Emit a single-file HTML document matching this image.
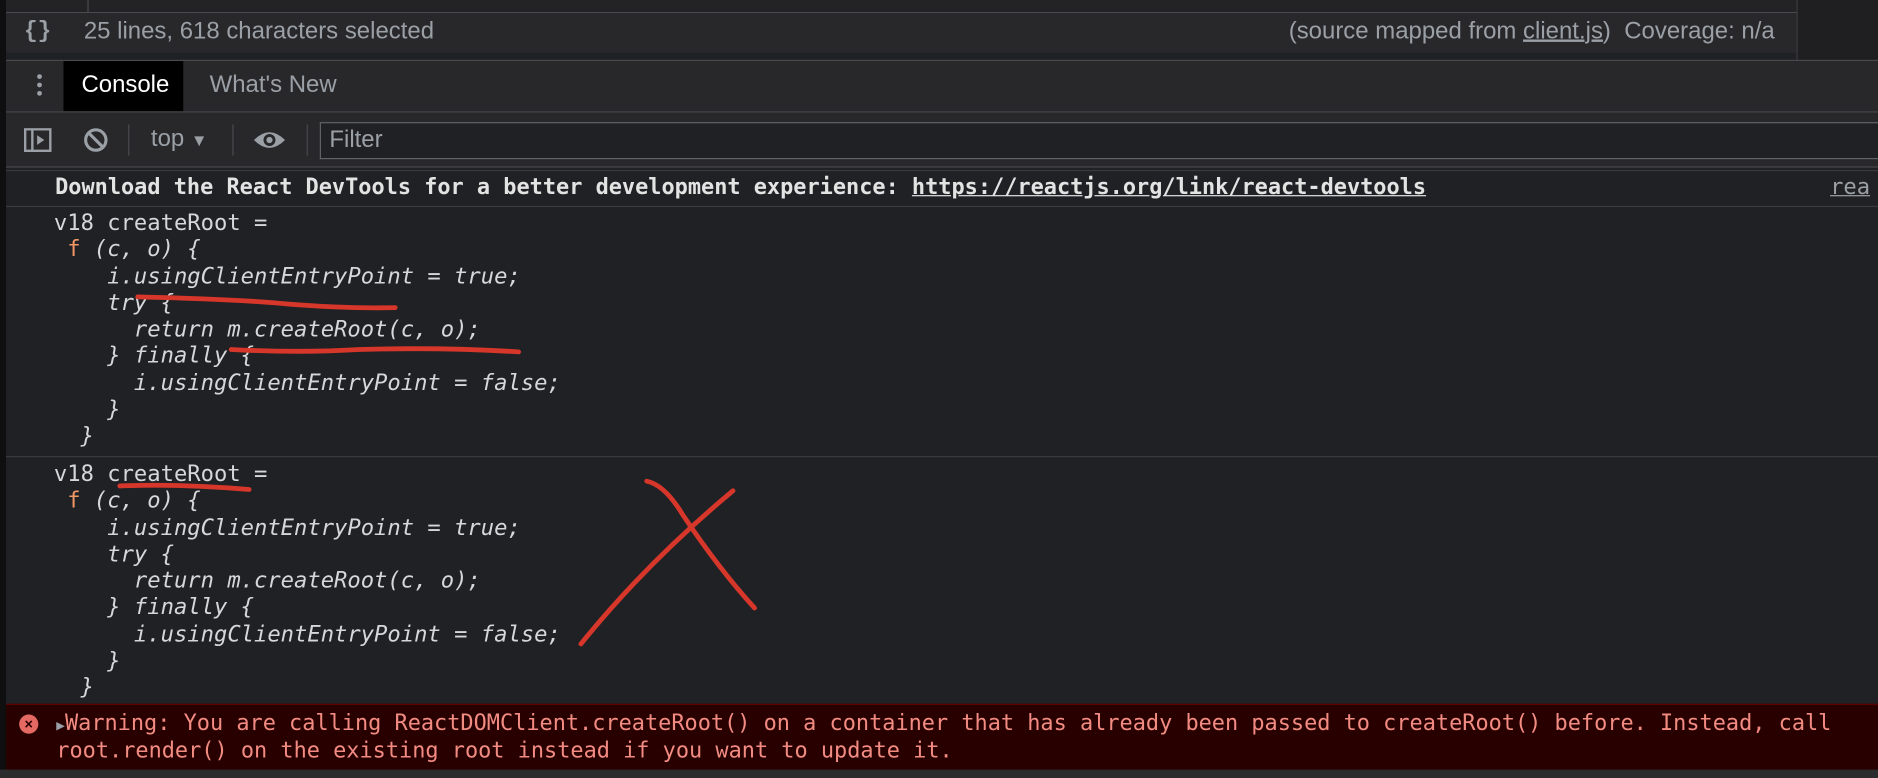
<!DOCTYPE html>
<html><head><meta charset="utf-8"><style>
html,body{margin:0;padding:0;background:#202124;overflow:hidden;width:1878px;height:778px}
#w{position:absolute;left:0;top:0;width:1568px;height:650px;transform:scale(1.19770,1.19692);transform-origin:0 0;background:#202124;font-family:"Liberation Sans",sans-serif}
.a{position:absolute}
.mono{font-family:"DejaVu Sans Mono","Liberation Mono",monospace;font-size:18.5px;white-space:pre;color:#d5d7da}
.code{font-style:italic}
</style></head><body><div id="w">
<div class="a" style="left:0;top:0;width:1568px;height:10px;background:#232325"></div>
<div class="a" style="left:73px;top:0;width:1px;height:10px;background:#4a4a4c"></div>
<div class="a" style="left:5px;top:10px;width:1495px;height:1px;background:#4a4a4d"></div>
<div class="a" style="left:5px;top:11px;width:1495px;height:33px;background:#28282b"></div>
<div class="a" style="left:1500px;top:0;width:1px;height:50px;background:#3e3e40"></div>
<div class="a" style="left:1501px;top:0;width:67px;height:50px;background:#1f1f21"></div>
<div class="a" style="left:20px;top:15px;font-size:19px;color:#9aa0a6;font-family:'Liberation Mono',monospace;font-weight:bold">{}</div>
<div class="a" style="left:70px;top:15px;font-size:20px;color:#9aa0a6">25 lines, 618 characters selected</div>
<div class="a" style="left:1076px;top:15px;font-size:20px;color:#9aa0a6;white-space:nowrap">(source mapped from <u>client.js</u>)&nbsp; Coverage: n/a</div>
<div class="a" style="left:5px;top:50px;width:1563px;height:1px;background:#4a4a4d"></div>
<div class="a" style="left:5px;top:51px;width:1563px;height:42px;background:#28282b"></div>
<div class="a" style="left:31px;top:62px;width:4px;height:4px;border-radius:2px;background:#9aa0a6;box-shadow:0 7px 0 #9aa0a6,0 14px 0 #9aa0a6"></div>
<div class="a" style="left:53px;top:51px;width:100px;height:42px;background:#000"></div>
<div class="a" style="left:68px;top:60px;font-size:20px;color:#fff">Console</div>
<div class="a" style="left:175px;top:60px;font-size:20px;color:#9aa0a6">What's New</div>
<div class="a" style="left:5px;top:93px;width:1563px;height:1px;background:#48484b"></div>
<div class="a" style="left:5px;top:94px;width:1563px;height:45px;background:#28282b"></div>
<svg class="a" style="left:20px;top:107px" width="24" height="20" viewBox="0 0 24 20"><rect x="1" y="1" width="21" height="18" fill="none" stroke="#9aa0a6" stroke-width="2"/><line x1="7" y1="1" x2="7" y2="19" stroke="#9aa0a6" stroke-width="2"/><path d="M11 6 L17 10 L11 14Z" fill="#9aa0a6"/></svg>
<svg class="a" style="left:69px;top:106px" width="22" height="22" viewBox="0 0 22 22"><circle cx="11" cy="11" r="8.5" fill="none" stroke="#9aa0a6" stroke-width="2.6"/><line x1="5" y1="5" x2="17" y2="17" stroke="#9aa0a6" stroke-width="2.6"/></svg>
<div class="a" style="left:107px;top:104px;width:1px;height:26px;background:#4a4a4d"></div>
<div class="a" style="left:126px;top:105px;font-size:20px;color:#9aa0a6">top <span style="font-size:14px">▼</span></div>
<div class="a" style="left:194px;top:104px;width:1px;height:26px;background:#4a4a4d"></div>
<svg class="a" style="left:211px;top:107px" width="28" height="20" viewBox="0 0 28 20"><path d="M1 10 Q14 -3 27 10 Q14 23 1 10Z" fill="#9aa0a6"/><circle cx="14" cy="10" r="5" fill="#28282b"/><circle cx="14" cy="10" r="2.6" fill="#9aa0a6"/></svg>
<div class="a" style="left:256px;top:104px;width:1px;height:26px;background:#4a4a4d"></div>
<div class="a" style="left:267px;top:102px;width:1300px;height:29px;border:1px solid #5f6368;border-right:none;background:#202124"></div>
<div class="a" style="left:275px;top:106px;font-size:20px;color:#9aa0a6">Filter</div>
<div class="a" style="left:5px;top:139px;width:1563px;height:1px;background:#4a4a4d"></div>
<div class="a" style="left:5px;top:142px;width:1563px;height:1px;background:#3a3a3c"></div>
<div class="a" style="left:0;top:0;width:5px;height:650px;background:#0f0f10"></div>
<div class="a mono" style="left:46px;top:146px;font-weight:bold;color:#e3e3e3;font-size:18.3px">Download the React DevTools for a better development experience: <u>https://reactjs.org/link/react-devtools</u></div>
<div class="a mono" style="left:1528px;top:146px;color:#9aa0a6"><u>rea</u></div>
<div class="a" style="left:5px;top:172px;width:1563px;height:1px;background:#3c3c3e"></div>
<div class="a mono" style="left:45px;top:176px;line-height:22.3px">v18 createRoot =
 <span style="color:#f29766">f</span><span class="code"> (c, o) {
    i.usingClientEntryPoint = true;
    try {
      return m.createRoot(c, o);
    } finally {
      i.usingClientEntryPoint = false;
    }
  }</span></div>
<div class="a" style="left:5px;top:381px;width:1563px;height:1px;background:#3c3c3e"></div>
<div class="a mono" style="left:45px;top:386px;line-height:22.3px">v18 createRoot =
 <span style="color:#f29766">f</span><span class="code"> (c, o) {
    i.usingClientEntryPoint = true;
    try {
      return m.createRoot(c, o);
    } finally {
      i.usingClientEntryPoint = false;
    }
  }</span></div>
<div class="a" style="left:5px;top:588px;width:1563px;height:55px;background:#290000;border-top:1px solid #5c0000"></div>
<div class="a" style="left:16px;top:597px;width:16px;height:16px;border-radius:8px;background:#e46962;color:#290000;font-size:12px;font-weight:bold;text-align:center;line-height:16px">×</div>
<div class="a mono" style="left:47px;top:594px;line-height:22px;color:#f28b82;font-size:18.3px"><span style="color:#9aa0a6;font-size:12px">▶</span>Warning: You are calling ReactDOMClient.createRoot() on a container that has already been passed to createRoot() before. Instead, call
root.render() on the existing root instead if you want to update it.</div>
<div class="a" style="left:0;top:643px;width:1568px;height:7px;background:#2b2b2d"></div>
<svg class="a" style="left:0;top:0" width="1568" height="650" viewBox="0 0 1568 650">
<g fill="none" stroke="#d7372a" stroke-width="4" stroke-linecap="round">
<path d="M115 248 Q200 250 240 254 Q290 258 330 257"/>
<path d="M193 292 Q250 295 300 292 Q370 290 433 294"/>
<path d="M100 406 Q150 404 208 409"/>
<path d="M485 538 Q540 470 612 410"/>
<path d="M540 402 Q555 405 570 430 Q600 475 630 508"/>
</g></svg>
</div></body></html>
